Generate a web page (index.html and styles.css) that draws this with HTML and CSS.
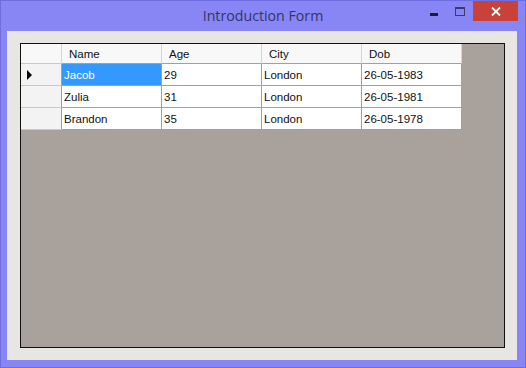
FILE: index.html
```html
<!DOCTYPE html>
<html>
<head>
<meta charset="utf-8">
<link rel="stylesheet" href="styles.css">
</head>
<body>
<div class="window">
  <div class="titlebar">
    <div class="title">Introduction Form</div>
    <div class="controls">
      <div class="btn min"><svg width="8" height="3" viewBox="0 0 8 3"><rect x="0" y="0" width="8" height="3" fill="#1d1d3a"/></svg></div>
      <div class="btn max"><svg width="10" height="9" viewBox="0 0 10 9"><rect x="0.5" y="0.5" width="9" height="8" fill="none" stroke="#3a3a70" stroke-width="1"/><rect x="0.5" y="0.5" width="9" height="1.5" fill="#3a3a70"/></svg></div>
      <div class="btn close"><svg width="10" height="9" viewBox="0 0 10 9"><path d="M1 0.5 L9 8.5 M9 0.5 L1 8.5" stroke="#fff" stroke-width="1.8"/></svg></div>
    </div>
  </div>
  <div class="client">
    <div class="grid">
      <div class="table">
        <div class="row head">
          <div class="rh"></div>
          <div class="cell">Name</div>
          <div class="cell">Age</div>
          <div class="cell">City</div>
          <div class="cell">Dob</div>
        </div>
        <div class="row">
          <div class="rh"><span class="arrow"></span></div>
          <div class="cell sel">Jacob</div>
          <div class="cell">29</div>
          <div class="cell">London</div>
          <div class="cell">26-05-1983</div>
        </div>
        <div class="row">
          <div class="rh"></div>
          <div class="cell">Zulia</div>
          <div class="cell">31</div>
          <div class="cell">London</div>
          <div class="cell">26-05-1981</div>
        </div>
        <div class="row">
          <div class="rh"></div>
          <div class="cell">Brandon</div>
          <div class="cell">35</div>
          <div class="cell">London</div>
          <div class="cell">26-05-1978</div>
        </div>
      </div>
    </div>
  </div>
</div>
</body>
</html>
```
FILE: styles.css
```css
html, body {
  margin: 0;
  padding: 0;
}
body {
  width: 526px;
  height: 368px;
  overflow: hidden;
}
.window {
  width: 526px;
  height: 368px;
  box-sizing: border-box;
  background: #8786f4;
  border: 1px solid #6f6ee0;
  display: flex;
  flex-direction: column;
}
.titlebar {
  height: 30px;
  position: relative;
  display: flex;
  align-items: flex-start;
}
.title {
  position: absolute;
  left: 0;
  right: 0;
  top: 5px;
  text-align: center;
  font-family: "Open Sans", "Noto Sans", sans-serif;
  font-size: 14.2px;
  color: #34346a;
}
.controls {
  margin-left: auto;
  display: flex;
  margin-right: 7px;
}
.btn {
  height: 20px;
  display: flex;
  align-items: center;
  justify-content: center;
}
.btn.min {
  width: 26px;
  align-items: flex-end;
  padding-bottom: 5px;
  box-sizing: border-box;
}
.btn.max {
  width: 26px;
  align-items: flex-start;
  padding-top: 6px;
  box-sizing: border-box;
}
.btn.close {
  width: 45px;
  background: #c8423a;
}
.client {
  flex: 1;
  margin: 0 8px 7px 6px;
  background: #e8e6e2;
  padding: 12px 12px 12px 13px;
  display: flex;
}
.grid {
  flex: 1;
  border: 1px solid #111;
  background: #a8a19c;
}
.table {
  display: flex;
  flex-direction: column;
  width: 441px;
  font-family: "Liberation Sans", Arial, sans-serif;
  font-size: 11.5px;
  color: #111;
}
.row {
  display: flex;
  height: 22px;
}
.row.head {
  height: 20px;
}
.rh {
  flex: none;
  background: #f3f3f3;
  border-right: 1px solid #a0a0a0;
  border-bottom: 1px solid #c8c8c8;
  display: flex;
  align-items: center;
  padding-left: 6px;
  box-sizing: content-box;
  width: 34px;
}
.cell {
  flex: none;
  background: #fff;
  border-right: 1px solid #a0a0a0;
  border-bottom: 1px solid #a0a0a0;
  display: flex;
  align-items: center;
  padding-left: 2px;
  box-sizing: border-box;
  width: 100px;
  white-space: nowrap;
}
.head .cell {
  background: #f8f8f8;
  padding-left: 7px;
  border-right: 1px solid #d4d4d4;
}
.head .rh {
  background: #f8f8f8;
  border-right: 1px solid #d4d4d4;
}
.cell.sel {
  background: #3399ff;
  color: #fff;
}
.arrow {
  width: 0;
  height: 0;
  border-top: 5px solid transparent;
  border-bottom: 5px solid transparent;
  border-left: 5px solid #000;
}
```
